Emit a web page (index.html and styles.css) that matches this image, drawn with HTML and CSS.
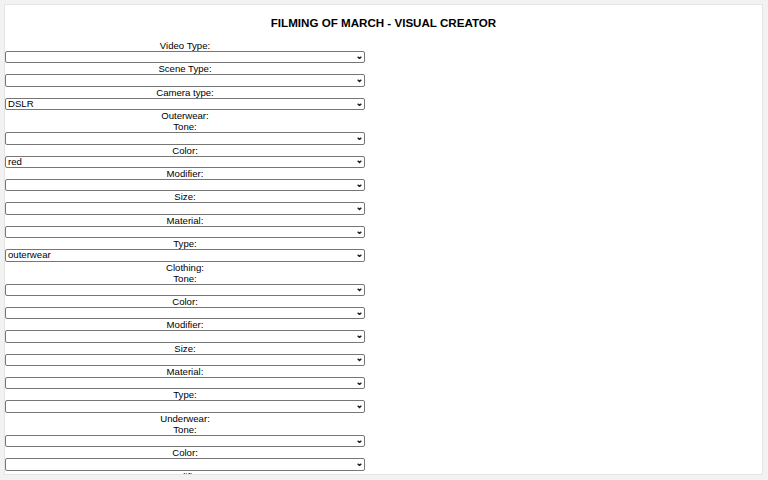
FILE: index.html
```html
<!DOCTYPE html>
<html>
<head>
<meta charset="utf-8">
<link rel="stylesheet" href="styles.css">
</head>
<body>
<div class="panel">
  <h1 class="title">FILMING OF MARCH - VISUAL CREATOR</h1>
  <form class="form">
    <label class="lbl">Video Type:</label>
    <div class="field"><select class="sel"><option></option></select><svg class="chev" viewBox="0 0 6 4"><path d="M0.8 0.8 L3 3 L5.2 0.8"/></svg></div>
    <label class="lbl">Scene Type:</label>
    <div class="field"><select class="sel"><option></option></select><svg class="chev" viewBox="0 0 6 4"><path d="M0.8 0.8 L3 3 L5.2 0.8"/></svg></div>
    <label class="lbl">Camera type:</label>
    <div class="field"><select class="sel"><option>DSLR</option></select><svg class="chev" viewBox="0 0 6 4"><path d="M0.8 0.8 L3 3 L5.2 0.8"/></svg></div>
    <div class="group">Outerwear:</div>
    <label class="lbl">Tone:</label>
    <div class="field"><select class="sel"><option></option></select><svg class="chev" viewBox="0 0 6 4"><path d="M0.8 0.8 L3 3 L5.2 0.8"/></svg></div>
    <label class="lbl">Color:</label>
    <div class="field"><select class="sel"><option>red</option></select><svg class="chev" viewBox="0 0 6 4"><path d="M0.8 0.8 L3 3 L5.2 0.8"/></svg></div>
    <label class="lbl">Modifier:</label>
    <div class="field"><select class="sel"><option></option></select><svg class="chev" viewBox="0 0 6 4"><path d="M0.8 0.8 L3 3 L5.2 0.8"/></svg></div>
    <label class="lbl">Size:</label>
    <div class="field"><select class="sel"><option></option></select><svg class="chev" viewBox="0 0 6 4"><path d="M0.8 0.8 L3 3 L5.2 0.8"/></svg></div>
    <label class="lbl">Material:</label>
    <div class="field"><select class="sel"><option></option></select><svg class="chev" viewBox="0 0 6 4"><path d="M0.8 0.8 L3 3 L5.2 0.8"/></svg></div>
    <label class="lbl">Type:</label>
    <div class="field"><select class="sel"><option>outerwear</option></select><svg class="chev" viewBox="0 0 6 4"><path d="M0.8 0.8 L3 3 L5.2 0.8"/></svg></div>
    <div class="group">Clothing:</div>
    <label class="lbl">Tone:</label>
    <div class="field"><select class="sel"><option></option></select><svg class="chev" viewBox="0 0 6 4"><path d="M0.8 0.8 L3 3 L5.2 0.8"/></svg></div>
    <label class="lbl">Color:</label>
    <div class="field"><select class="sel"><option></option></select><svg class="chev" viewBox="0 0 6 4"><path d="M0.8 0.8 L3 3 L5.2 0.8"/></svg></div>
    <label class="lbl">Modifier:</label>
    <div class="field"><select class="sel"><option></option></select><svg class="chev" viewBox="0 0 6 4"><path d="M0.8 0.8 L3 3 L5.2 0.8"/></svg></div>
    <label class="lbl">Size:</label>
    <div class="field"><select class="sel"><option></option></select><svg class="chev" viewBox="0 0 6 4"><path d="M0.8 0.8 L3 3 L5.2 0.8"/></svg></div>
    <label class="lbl">Material:</label>
    <div class="field"><select class="sel"><option></option></select><svg class="chev" viewBox="0 0 6 4"><path d="M0.8 0.8 L3 3 L5.2 0.8"/></svg></div>
    <label class="lbl">Type:</label>
    <div class="field"><select class="sel"><option></option></select><svg class="chev" viewBox="0 0 6 4"><path d="M0.8 0.8 L3 3 L5.2 0.8"/></svg></div>
    <div class="group">Underwear:</div>
    <label class="lbl">Tone:</label>
    <div class="field"><select class="sel"><option></option></select><svg class="chev" viewBox="0 0 6 4"><path d="M0.8 0.8 L3 3 L5.2 0.8"/></svg></div>
    <label class="lbl">Color:</label>
    <div class="field"><select class="sel"><option></option></select><svg class="chev" viewBox="0 0 6 4"><path d="M0.8 0.8 L3 3 L5.2 0.8"/></svg></div>
    <label class="lbl">Modifier:</label>
    <div class="field"><select class="sel"><option></option></select><svg class="chev" viewBox="0 0 6 4"><path d="M0.8 0.8 L3 3 L5.2 0.8"/></svg></div>
  </form>
</div>
</body>
</html>
```
FILE: styles.css
```css
html, body {
  margin: 0;
  padding: 0;
}
body {
  background: #f2f2f2;
  padding: 4px 5px 5px 4px;
  font-family: "Liberation Sans", Arial, sans-serif;
  height: 480px;
  box-sizing: border-box;
  overflow: hidden;
}
.panel {
  background: #ffffff;
  border: 1px solid #e4e4e4;
  height: 100%;
  box-sizing: border-box;
  overflow: hidden;
}
.title {
  margin: 11px 0 11px 0;
  font-size: 11.6px;
  line-height: 13px;
  font-weight: bold;
  text-align: center;
  color: #000;
}
.form {
  width: 360px;
  display: flex;
  flex-direction: column;
  align-items: stretch;
}
.lbl, .group {
  display: block;
  font-size: 9.6px;
  line-height: 11px;
  height: 11px;
  text-align: center;
  color: #000;
}
.field {
  position: relative;
  height: 12.4px;
}
.sel {
  display: block;
  width: 360px;
  height: 12.4px;
  margin: 0;
  padding: 0 12px 0 2px;
  font-family: "Liberation Sans", Arial, sans-serif;
  font-size: 9.6px;
  line-height: 10px;
  border: 1px solid #767676;
  border-radius: 2px;
  background: #fff;
  color: #000;
  box-sizing: border-box;
  appearance: none;
  -webkit-appearance: none;
}
.chev {
  position: absolute;
  right: 3.5px;
  top: 4.8px;
  width: 5px;
  height: 3.4px;
  pointer-events: none;
}
.chev path {
  fill: none;
  stroke: #222;
  stroke-width: 1.7;
}
```
